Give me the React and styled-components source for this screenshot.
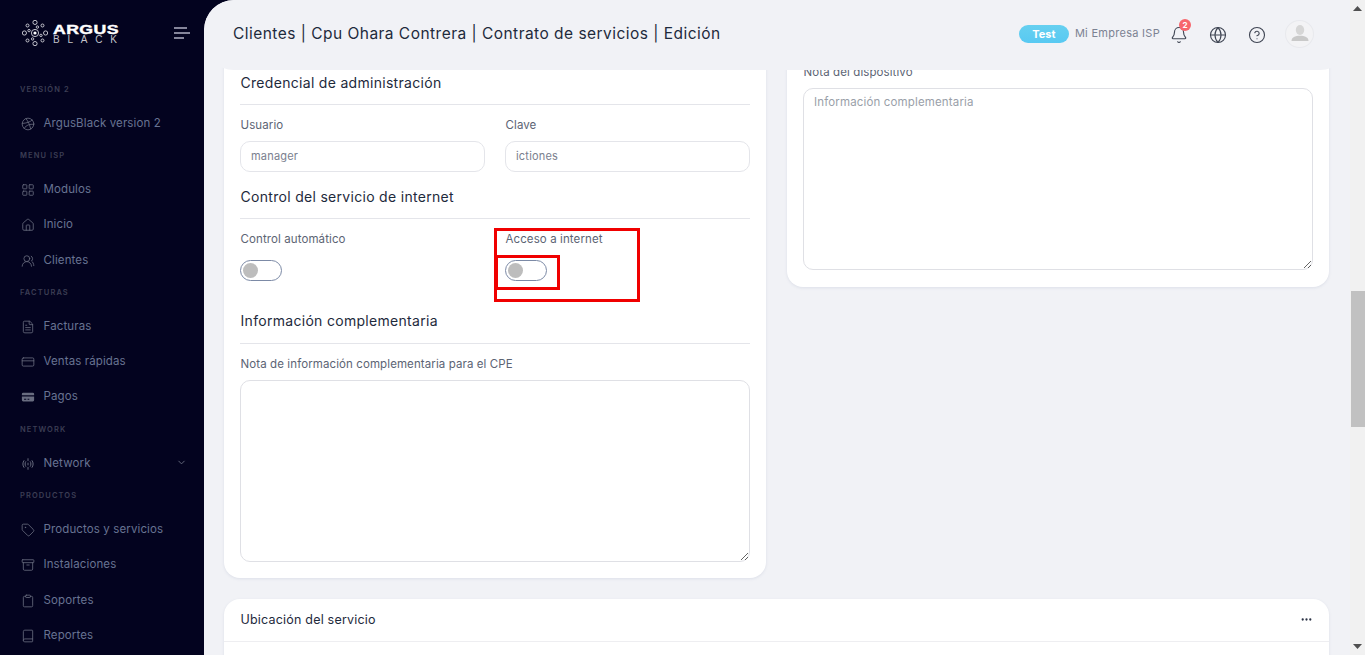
import styled, { createGlobalStyle } from "styled-components";
import {
  Archive,
  Bell,
  Book,
  ChevronDown,
  CircleHelp,
  Clipboard,
  CreditCard,
  Dribbble,
  Ellipsis,
  FileText,
  Globe,
  House,
  LayoutGrid,
  Tag,
  UsersRound,
} from "lucide-react";

const GlobalStyle = createGlobalStyle`
  html, body {
    margin: 0;
    height: 100%;
    overflow: hidden;
    background: #03031f;
    font-family: "Inter", "Noto Sans", "Liberation Sans", sans-serif;
  }
  #root {
    height: 100%;
  }
  * {
    box-sizing: border-box;
  }
`;

const NetworkIcon = ({ size }) => (
  <svg width={size} height={size} viewBox="0 0 16 16" fill="none" stroke="currentColor" strokeWidth="1.1">
    <path d="M8 1.5v3M8 6.5v3M8 11.5v3" />
    <path d="M5.6 5c-1.2 1.7-1.2 4.3 0 6M3.6 3.8c-1.9 2.5-1.9 5.9 0 8.4" />
    <path d="M10.4 5c1.2 1.7 1.2 4.3 0 6M12.4 3.8c1.9 2.5 1.9 5.9 0 8.4" />
  </svg>
);

const FilledCard = ({ size }) => (
  <svg width={size} height={size} viewBox="0 0 16 16" fill="currentColor">
    <path d="M2.5 3h11A1.5 1.5 0 0 1 15 4.5V6H1V4.5A1.5 1.5 0 0 1 2.5 3zM1 7.5h14v4A1.5 1.5 0 0 1 13.5 13h-11A1.5 1.5 0 0 1 1 11.5z" />
    <path d="M3.5 10h2.5v1H3.5zM7.5 10h2v1h-2z" fill="#03031f" />
  </svg>
);

const LogoMark = () => {
  const outer = [0, 45, 90, 135, 180, 225, 270, 315];
  const inner = [22, 112, 202, 292];
  return (
    <svg width="26" height="26" viewBox="0 0 26 26" fill="none" stroke="#d5d5dc" strokeWidth="0.9">
      <circle cx="13" cy="13" r="1.6" fill="#fff" stroke="none" />
      <circle cx="13" cy="13" r="3.6" />
      {inner.map((a) => (
        <circle
          key={a}
          cx={13 + 6.4 * Math.cos((a * Math.PI) / 180)}
          cy={13 + 6.4 * Math.sin((a * Math.PI) / 180)}
          r="1.2"
        />
      ))}
      {outer.map((a, i) => (
        <circle
          key={a}
          cx={13 + 10.6 * Math.cos((a * Math.PI) / 180)}
          cy={13 + 10.6 * Math.sin((a * Math.PI) / 180)}
          r={i % 2 ? 1.5 : 2.1}
        />
      ))}
    </svg>
  );
};

const menu = [
  { title: "Versión 2", items: [{ label: "ArgusBlack version 2", icon: Dribbble }] },
  {
    title: "Menu ISP",
    items: [
      { label: "Modulos", icon: LayoutGrid },
      { label: "Inicio", icon: House },
      { label: "Clientes", icon: UsersRound },
    ],
  },
  {
    title: "Facturas",
    items: [
      { label: "Facturas", icon: FileText },
      { label: "Ventas rápidas", icon: CreditCard },
      { label: "Pagos", icon: FilledCard },
    ],
  },
  { title: "Network", items: [{ label: "Network", icon: NetworkIcon, arrow: true }] },
  {
    title: "Productos",
    items: [
      { label: "Productos y servicios", icon: Tag },
      { label: "Instalaciones", icon: Archive },
      { label: "Soportes", icon: Clipboard },
      { label: "Reportes", icon: Book },
    ],
  },
];

const App = () => {
  return (
    <Page>
      <GlobalStyle />
      <Sidebar>
        <Brand>
          <Logo>
            <LogoMark />
            <LogoText>
              <strong>ARGUS</strong>
              <span>BLACK</span>
            </LogoText>
          </Logo>
          <Burger>
            <BurgerLine $w={13} />
            <BurgerLine $w={16} />
            <BurgerLine $w={10} />
          </Burger>
        </Brand>
        <nav>
          {menu.map((section) => (
            <div key={section.title}>
              <SectionLabel>{section.title}</SectionLabel>
              {section.items.map((item) => (
                <NavItem key={item.label}>
                  <NavIcon>
                    <item.icon size={14} strokeWidth={1.4} />
                  </NavIcon>
                  <span>{item.label}</span>
                  {item.arrow && (
                    <NavArrow>
                      <ChevronDown size={11} strokeWidth={2} />
                    </NavArrow>
                  )}
                </NavItem>
              ))}
            </div>
          ))}
        </nav>
      </Sidebar>

      <Main>
        <Header>
          <PageTitle>Clientes | Cpu Ohara Contrera | Contrato de servicios | Edición</PageTitle>
          <HeaderTools>
            <TestBadge>Test</TestBadge>
            <CompanyName>Mi Empresa ISP</CompanyName>
            <ToolIcon $w={38}>
              <Bell size={18} strokeWidth={1.5} />
              <Count>2</Count>
            </ToolIcon>
            <ToolIcon $w={39}>
              <Globe size={18} strokeWidth={1.5} />
            </ToolIcon>
            <ToolIcon $w={39}>
              <CircleHelp size={18} strokeWidth={1.5} />
            </ToolIcon>
            <Avatar>
              <svg width="20" height="20" viewBox="0 0 20 20" fill="#c9c9c9">
                <ellipse cx="10" cy="7" rx="4.2" ry="5" fill="#d6d6d6" />
                <path d="M1.5 18c0-3.6 3.6-5.2 8.5-5.2s8.5 1.6 8.5 5.2z" />
              </svg>
            </Avatar>
          </HeaderTools>
        </Header>

        <Sheet>
          <Columns>
            <Card $pad="33px 16px 16px">
              <SectionTitle>Credencial de administración</SectionTitle>
              <FieldRow>
                <Field>
                  <FieldLabel>Usuario</FieldLabel>
                  <TextInput defaultValue="manager" readOnly />
                </Field>
                <Field>
                  <FieldLabel>Clave</FieldLabel>
                  <TextInput defaultValue="ictiones" readOnly />
                </Field>
              </FieldRow>

              <SectionTitle $top={15}>Control del servicio de internet</SectionTitle>
              <FieldRow>
                <Field>
                  <FieldLabel $gap={12}>Control automático</FieldLabel>
                  <Toggle />
                </Field>
                <Field>
                  <FieldLabel $gap={12}>Acceso a internet</FieldLabel>
                  <Toggle />
                  <Highlight $left={-11} $top={-3} $w={146} $h={74} />
                  <Highlight $left={-10} $top={24} $w={65} $h={35} />
                </Field>
              </FieldRow>

              <SectionTitle $top={30} $bottom={12}>
                Información complementaria
              </SectionTitle>
              <FieldRow>
                <WideField>
                  <FieldLabel>Nota de información complementaria para el CPE</FieldLabel>
                  <TextArea $h={182} />
                </WideField>
              </FieldRow>
            </Card>

            <SideCard>
              <Card $pad="24px 16px 17px">
                <FieldLabel>Nota del dispositivo</FieldLabel>
                <TextArea $h={182} placeholder="Información complementaria" />
              </Card>
            </SideCard>
          </Columns>

          <LocationCard>
            <LocationHead>
              <LocationTitle>Ubicación del servicio</LocationTitle>
              <Ellipsis size={13} strokeWidth={2.2} color="#2b3345" />
            </LocationHead>
          </LocationCard>
        </Sheet>
      </Main>

      <ScrollBar>
        <ScrollArrow>
          <svg width="9" height="5" viewBox="0 0 9 5" fill="#505050">
            <path d="M4.5 0L9 5H0z" />
          </svg>
        </ScrollArrow>
        <ScrollTrack>
          <ScrollThumb />
        </ScrollTrack>
        <ScrollArrow>
          <svg width="9" height="5" viewBox="0 0 9 5" fill="#505050">
            <path d="M0 0h9L4.5 5z" />
          </svg>
        </ScrollArrow>
      </ScrollBar>
    </Page>
  );
};

const Page = styled.div`
  display: flex;
  height: 655px;
  overflow: hidden;
`;

const Sidebar = styled.aside`
  flex: none;
  width: 204px;
  background: #03031f;
  color: #687392;
`;

const Brand = styled.div`
  display: flex;
  align-items: center;
  justify-content: space-between;
  height: 66px;
  padding: 0 14px 0 22px;
  margin-bottom: 8px;
`;

const Logo = styled.div`
  display: flex;
  align-items: center;
  gap: 5px;
`;

const LogoText = styled.div`
  display: flex;
  flex-direction: column;
  width: 67px;
  margin-top: 1px;
  line-height: 1;
  color: #fff;
  strong {
    font-family: "Liberation Sans", sans-serif;
    font-size: 13px;
    font-weight: 700;
    width: 48px;
    height: 11px;
    line-height: 11px;
    transform: scaleX(1.36);
    transform-origin: left center;
    letter-spacing: 0.3px;
    -webkit-text-stroke: 0.4px #fff;
  }
  span {
    font-family: "Liberation Sans", sans-serif;
    font-size: 10px;
    height: 9px;
    line-height: 9px;
    letter-spacing: 7.8px;
    white-space: nowrap;
    color: #c4c4cc;
    font-weight: 400;
  }
`;

const Burger = styled.div`
  display: flex;
  flex-direction: column;
  gap: 3px;
  width: 16px;
`;

const BurgerLine = styled.i`
  display: block;
  height: 2px;
  width: ${(p) => p.$w}px;
  background: #85859a;
`;

const SectionLabel = styled.div`
  display: flex;
  align-items: center;
  height: 31px;
  padding-left: 20px;
  font-size: 7.5px;
  font-weight: 600;
  letter-spacing: 1.1px;
  text-transform: uppercase;
  color: #3c3e54;
`;

const NavItem = styled.a`
  display: flex;
  align-items: center;
  height: 35.3px;
  padding: 0 17px 0 21px;
  font-size: 11.5px;
  letter-spacing: 0.12px;
  white-space: nowrap;
  color: #687392;
`;

const NavIcon = styled.span`
  display: flex;
  justify-content: center;
  flex: none;
  width: 14px;
  margin-right: 8.5px;
  margin-top: 2px;
  color: #696d80;
`;

const NavArrow = styled.span`
  display: flex;
  margin-left: auto;
  color: #696d80;
`;

const Main = styled.main`
  display: flex;
  flex-direction: column;
  flex: 1;
  min-width: 0;
  height: 655px;
  overflow: hidden;
  background: #f1f2f6;
  border-top-left-radius: 30px;
`;

const Header = styled.header`
  position: relative;
  z-index: 2;
  flex: none;
  display: flex;
  align-items: center;
  justify-content: space-between;
  height: 70px;
  padding: 0 36px 4px 29px;
  background: #f1f2f6;
  border-radius: 30px 0 30px 30px;
`;

const PageTitle = styled.h1`
  margin: 0;
  font-size: 15.5px;
  font-weight: 400;
  letter-spacing: 0.47px;
  white-space: nowrap;
  color: #1e2a3c;
`;

const HeaderTools = styled.div`
  display: flex;
  align-items: center;
  margin-top: 2px;
`;

const TestBadge = styled.span`
  display: flex;
  align-items: center;
  justify-content: center;
  width: 50px;
  height: 18px;
  border-radius: 9px;
  background: linear-gradient(180deg, #66d0f0, #58c9f2);
  color: #fff;
  font-size: 11px;
  font-weight: 700;
`;

const CompanyName = styled.span`
  margin: 0 0 2px 6px;
  font-size: 11px;
  letter-spacing: 0.28px;
  color: #7c8292;
  white-space: nowrap;
`;

const ToolIcon = styled.span`
  position: relative;
  display: flex;
  justify-content: center;
  width: ${(p) => p.$w}px;
  margin-top: 2px;
  color: #3f4553;
`;

const Count = styled.b`
  position: absolute;
  top: -7px;
  left: 19px;
  width: 12px;
  height: 12px;
  border-radius: 50%;
  background: #f7666c;
  color: #fff;
  font-size: 8px;
  line-height: 12px;
  text-align: center;
`;

const Avatar = styled.span`
  display: flex;
  align-items: flex-end;
  justify-content: center;
  width: 29px;
  height: 28px;
  margin-left: 9px;
  padding-bottom: 4px;
  border: 1px solid #e8e9ed;
  border-radius: 50%;
  background: #f3f3f5;
`;

const Sheet = styled.div`
  flex: 1;
  margin-top: -30px;
  padding: 0 21px 0 20px;
  min-height: 0;
`;

const Columns = styled.div`
  display: grid;
  grid-template-columns: 542px 542px;
  gap: 21px;
`;

const Card = styled.section`
  padding: ${(p) => p.$pad};
  background: #fff;
  border-radius: 16px;
  box-shadow: 0 1px 3px rgba(120, 130, 170, 0.16);
`;

const SideCard = styled.div`
  align-self: start;
`;

const SectionTitle = styled.h3`
  margin: ${(p) => p.$top || 0}px 0 0;
  padding: 0 0 ${(p) => p.$bottom || 11}px 0.5px;
  border-bottom: 1px solid #e4e5ea;
  font-size: 14px;
  line-height: 20px;
  font-weight: 400;
  letter-spacing: 0.3px;
  color: #1e2a3c;
`;

const FieldRow = styled.div`
  display: grid;
  grid-template-columns: 245px 245px;
  gap: 20px;
  padding-top: 12px;
`;

const Field = styled.div`
  position: relative;
`;

const WideField = styled.div`
  grid-column: 1 / -1;
`;

const FieldLabel = styled.label`
  display: block;
  margin-bottom: ${(p) => p.$gap || 7}px;
  padding-left: 0.5px;
  font-size: 11.5px;
  line-height: 17px;
  letter-spacing: 0.1px;
  color: #5c6474;
`;

const TextInput = styled.input`
  display: block;
  width: 100%;
  height: 31px;
  padding: 0 10px 2px;
  border: 1px solid #e4e5ea;
  border-radius: 10px;
  outline: none;
  background: #fff;
  font-family: inherit;
  font-size: 11px;
  letter-spacing: 0.2px;
  color: #7a808e;
`;

const TextArea = styled.textarea`
  display: block;
  width: 100%;
  height: ${(p) => p.$h}px;
  padding: 6px 10px;
  border: 1px solid #dfe0e5;
  border-radius: 10px;
  outline: none;
  background: #fff;
  font-family: inherit;
  font-size: 11.5px;
  letter-spacing: 0.15px;
  color: #7a808e;
  &::placeholder {
    color: #9a9fa9;
    opacity: 1;
  }
`;

const Toggle = styled.span`
  display: block;
  width: 42px;
  height: 21px;
  padding: 2px 0 0 2px;
  border: 1px solid #7c8aa6;
  border-radius: 11px;
  background: #fff;
  &::before {
    content: "";
    display: block;
    width: 15px;
    height: 15px;
    border-radius: 50%;
    background: #bdbdbd;
  }
`;

const Highlight = styled.span`
  position: absolute;
  left: ${(p) => p.$left}px;
  top: ${(p) => p.$top}px;
  width: ${(p) => p.$w}px;
  height: ${(p) => p.$h}px;
  border: 3px solid #f00000;
  pointer-events: none;
`;

const LocationCard = styled.section`
  margin-top: 21px;
  height: 200px;
  background: #fff;
  border-radius: 16px;
  box-shadow: 0 1px 3px rgba(120, 130, 170, 0.16);
`;

const LocationHead = styled.div`
  display: flex;
  align-items: center;
  justify-content: space-between;
  height: 43px;
  padding: 0 16px 1px 16.5px;
  border-bottom: 1px solid #eeeef1;
`;

const LocationTitle = styled.h4`
  margin: 0;
  font-size: 12.5px;
  font-weight: 400;
  letter-spacing: 0.2px;
  color: #1e2a3c;
`;

const ScrollBar = styled.div`
  display: flex;
  flex-direction: column;
  flex: none;
  width: 15px;
  height: 655px;
  background: #f1f1f1;
`;

const ScrollArrow = styled.div`
  display: flex;
  align-items: center;
  justify-content: center;
  flex: none;
  height: 17px;
`;

const ScrollTrack = styled.div`
  flex: 1;
  padding: 274px 0 0 1px;
`;

const ScrollThumb = styled.div`
  height: 136px;
  background: #c1c1c1;
`;

export default App;
